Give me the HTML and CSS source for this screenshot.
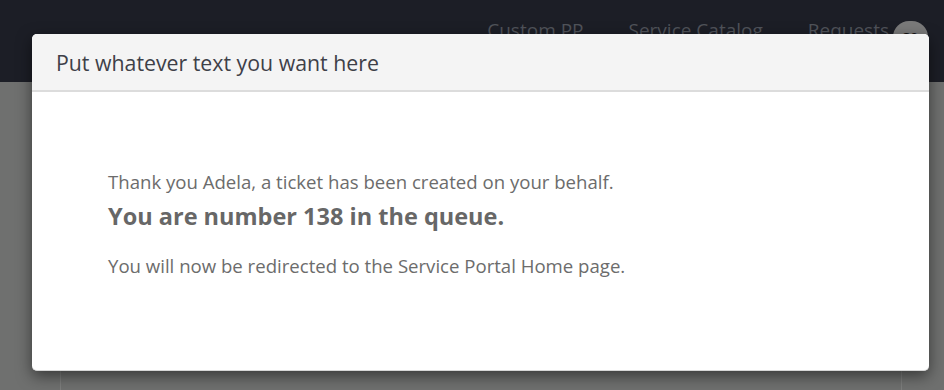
FILE: index.html
```html
<!DOCTYPE html>
<html>
<head>
<meta charset="utf-8">
<link rel="stylesheet" href="styles.css">
</head>
<body>
<div class="page">
  <header class="navbar">
    <nav class="nav">
      <span class="nav-item">Custom PP</span>
      <span class="nav-item">Service Catalog</span>
      <span class="nav-item">Requests <span class="badge">30</span></span>
    </nav>
  </header>
  <main class="content">
    <div class="card"></div>
  </main>
</div>
<div class="modal">
  <div class="modal-header">Put whatever text you want here</div>
  <div class="modal-body">
    <p class="line">Thank you Adela, a ticket has been created on your behalf.</p>
    <p class="queue">You are number 138 in the queue.</p>
    <p class="line redirect">You will now be redirected to the Service Portal Home page.</p>
  </div>
</div>
</body>
</html>
```
FILE: styles.css
```css
html, body {
  margin: 0;
  padding: 0;
}
body {
  width: 944px;
  height: 390px;
  overflow: hidden;
  background: #6f706f;
  font-family: "Open Sans", Lato, sans-serif;
  position: relative;
}
.navbar {
  height: 82px;
  background: #1c1e26;
  display: flex;
  justify-content: flex-end;
}
.nav {
  display: flex;
  gap: 45px;
  padding: 17px 16px 0 0;
  font-size: 19px;
  color: #50535a;
}
.nav-item {
  display: flex;
  align-items: flex-start;
  gap: 4px;
}
.badge {
  background: #7a7a7a;
  color: #111;
  font-weight: bold;
  font-size: 13px;
  border-radius: 17px;
  width: 35px;
  height: 32px;
  line-height: 32px;
  text-align: center;
  margin-top: 4px;
}
.content {
  padding: 0 42px 0 60px;
}
.card {
  height: 308px;
  border-left: 1px solid #7d7e7d;
  border-right: 1px solid #7d7e7d;
  background: #6f706f;
}
.modal {
  position: absolute;
  top: 34px;
  left: 32px;
  width: 897px;
  height: 337px;
  background: #fff;
  border-radius: 5px;
  border-bottom: 1px solid #d6d6d6;
  box-shadow: 0 5px 15px rgba(0,0,0,0.5);
  overflow: hidden;
  box-sizing: border-box;
}
.modal-header {
  height: 58px;
  box-sizing: border-box;
  background: #f4f4f4;
  border-bottom: 2px solid #dcdcdc;
  padding: 14px 24px 0;
  font-size: 21.3px;
  color: #3e4048;
}
.modal-body {
  padding: 78px 76px 0;
  color: #6c6c6c;
}
.modal-body p {
  margin: 0;
}
.line {
  font-size: 18.6px;
  line-height: 24px;
}
.queue {
  font-size: 23.5px;
  font-weight: bold;
  line-height: 30px;
  margin-top: 7px !important;
  color: #676767;
}
.redirect {
  margin-top: 23px !important;
}
```
